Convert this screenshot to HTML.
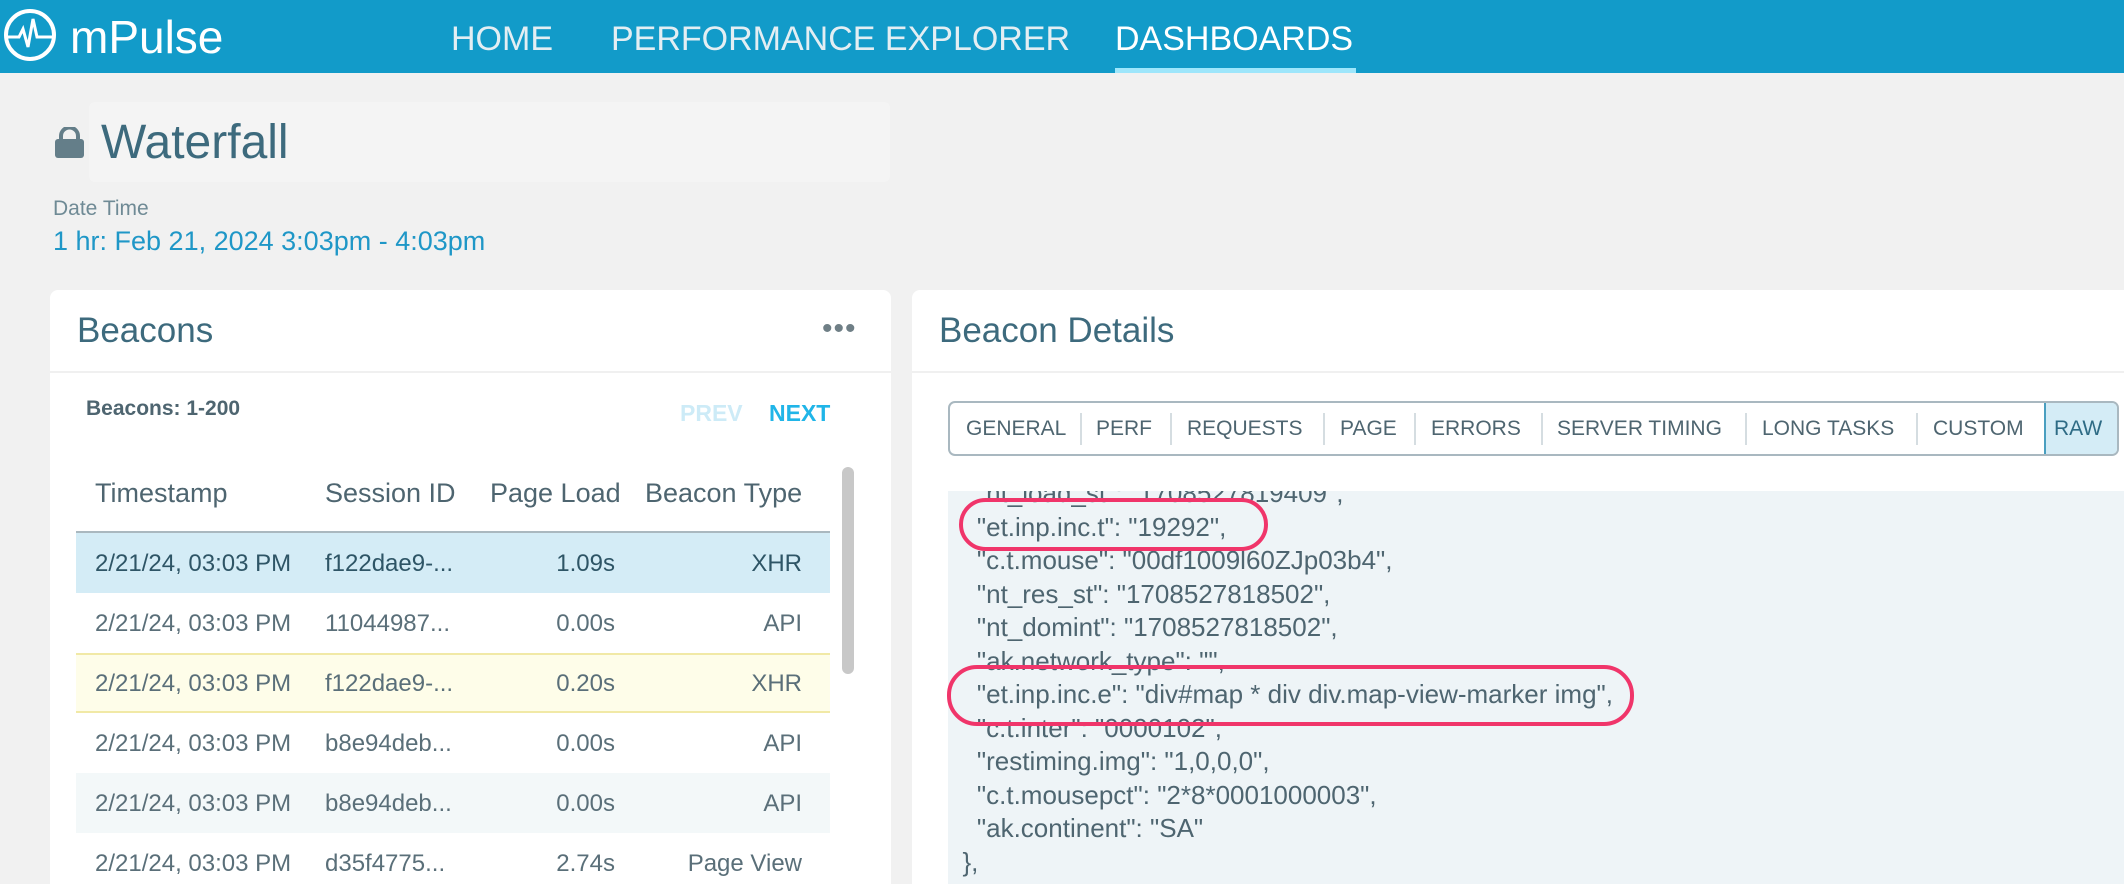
<!DOCTYPE html>
<html style="overflow:hidden;width:2124px;height:884px"><head><meta charset="utf-8"><style>
*{margin:0;padding:0;box-sizing:border-box}
body{width:2124px;height:884px;overflow:hidden;background:#f1f1f1;font-family:"Liberation Sans",sans-serif;position:relative}
.a{position:absolute;white-space:nowrap}
#hdr{position:absolute;left:0;top:0;width:2124px;height:73px;background:#129bc9}
.nav{color:#e3eef3;font-size:34px;top:20px}
.panel{position:absolute;background:#fff;border-radius:8px 8px 0 0}
.th{font-size:27px;color:#4e6570;top:478px}
.row{position:absolute;left:76px;width:754px;height:60px}
.row span{position:absolute;top:17px;font-size:24px;color:#5a6f79}
.tab{font-size:21px;color:#4e6570;top:417px}
.sep{position:absolute;top:413px;width:2px;height:32px;background:#d5dde1}
#code{position:absolute;left:948px;top:491px;width:1176px;height:393px;background:#eef4f7;overflow:hidden}
#code div{position:absolute;left:0;top:-14px;font-size:26px;color:#4e6570;line-height:33.5px;white-space:pre}
.ell{position:absolute;border:4px solid #f0356a;border-radius:30px}
</style></head><body>
<div id="hdr"></div>
<svg class="a" style="left:3px;top:7px" width="54" height="56" viewBox="0 0 54 56"><circle cx="27" cy="28" r="24" fill="none" stroke="#fff" stroke-width="4"/><path d="M5 30 H16 L20 22 L25 40 L30 12 L34 30 H49" fill="none" stroke="#fff" stroke-width="3"/></svg>
<div class="a" style="left:70px;top:10px;font-size:46px;color:#fff">mPulse</div>
<div class="a nav" style="left:451px">HOME</div>
<div class="a nav" style="left:611px">PERFORMANCE EXPLORER</div>
<div class="a nav" style="left:1115px;color:#fff">DASHBOARDS</div>
<div class="a" style="left:1115px;top:68px;width:241px;height:5px;background:#9ee6fb"></div>

<div class="a" style="left:89px;top:102px;width:801px;height:80px;background:#f4f4f4;border-radius:6px"></div>
<svg class="a" style="left:55px;top:127px" width="29" height="31" viewBox="0 0 29 31"><path d="M6 13 V9 A8.5 8.5 0 0 1 23 9 V13" fill="none" stroke="#647e89" stroke-width="4"/><rect x="0" y="12" width="29" height="19" rx="3" fill="#647e89"/></svg>
<div class="a" style="left:101px;top:115px;font-size:48px;color:#3d6a7d">Waterfall</div>
<div class="a" style="left:53px;top:197px;font-size:21px;color:#6f8a95">Date Time</div>
<div class="a" style="left:53px;top:226px;font-size:27px;color:#1f97c7">1 hr: Feb 21, 2024 3:03pm - 4:03pm</div>

<div class="panel" style="left:50px;top:290px;width:841px;height:594px"></div>
<div class="a" style="left:50px;top:371px;width:841px;height:2px;background:#f0f0f0"></div>
<div class="a" style="left:77px;top:311px;font-size:35px;color:#3d6a7d">Beacons</div>
<div class="a" style="left:822px;top:312px;font-size:30px;color:#6f7f86;letter-spacing:1px">•••</div>
<div class="a" style="left:86px;top:397px;font-size:21px;font-weight:bold;color:#4e6570">Beacons: 1-200</div>
<div class="a" style="left:680px;top:400px;font-size:23px;font-weight:bold;color:#cdebf7">PREV</div>
<div class="a" style="left:769px;top:400px;font-size:23px;font-weight:bold;color:#20b5e8">NEXT</div>
<div class="a th" style="left:95px">Timestamp</div>
<div class="a th" style="left:325px">Session ID</div>
<div class="a th" style="left:490px">Page Load</div>
<div class="a th" style="left:645px">Beacon Type</div>
<div class="a" style="left:76px;top:531px;width:754px;height:3px;background:#aab8bf"></div>

<div class="row" style="top:533px;background:#d4ecf6"><span style="left:19px;color:#2e5566">2/21/24, 03:03 PM</span><span style="left:249px;color:#2e5566">f122dae9-...</span><span style="right:215px;color:#2e5566">1.09s</span><span style="right:28px;color:#2e5566">XHR</span></div>
<div class="row" style="top:593px"><span style="left:19px">2/21/24, 03:03 PM</span><span style="left:249px">11044987...</span><span style="right:215px">0.00s</span><span style="right:28px">API</span></div>
<div class="row" style="top:653px;background:#fefde9;border-top:2px solid #f1e9a6;border-bottom:2px solid #f1e9a6"><span style="left:19px;top:15px">2/21/24, 03:03 PM</span><span style="left:249px;top:15px">f122dae9-...</span><span style="right:215px;top:15px">0.20s</span><span style="right:28px;top:15px">XHR</span></div>
<div class="row" style="top:713px"><span style="left:19px">2/21/24, 03:03 PM</span><span style="left:249px">b8e94deb...</span><span style="right:215px">0.00s</span><span style="right:28px">API</span></div>
<div class="row" style="top:773px;background:#f3f8f9"><span style="left:19px">2/21/24, 03:03 PM</span><span style="left:249px">b8e94deb...</span><span style="right:215px">0.00s</span><span style="right:28px">API</span></div>
<div class="row" style="top:833px;height:51px"><span style="left:19px">2/21/24, 03:03 PM</span><span style="left:249px">d35f4775...</span><span style="right:215px">2.74s</span><span style="right:28px">Page View</span></div>
<div class="a" style="left:842px;top:467px;width:12px;height:207px;background:#c8c8c8;border-radius:6px"></div>

<div class="panel" style="left:912px;top:290px;width:1212px;height:594px;border-radius:8px 0 0 0"></div>
<div class="a" style="left:912px;top:371px;width:1212px;height:2px;background:#f0f0f0"></div>
<div class="a" style="left:939px;top:311px;font-size:35px;color:#3d6a7d">Beacon Details</div>
<div class="a" style="left:948px;top:401px;width:1171px;height:55px;border:2px solid #a9b8c0;border-radius:7px;overflow:hidden"><div class="a" style="left:1094px;top:0;width:80px;height:55px;background:#d4ecf6;border-left:2px solid #4a9fc0"></div></div>
<div class="a tab" style="left:966px">GENERAL</div><div class="sep" style="left:1080px"></div>
<div class="a tab" style="left:1096px">PERF</div><div class="sep" style="left:1170px"></div>
<div class="a tab" style="left:1187px">REQUESTS</div><div class="sep" style="left:1323px"></div>
<div class="a tab" style="left:1340px">PAGE</div><div class="sep" style="left:1414px"></div>
<div class="a tab" style="left:1431px">ERRORS</div><div class="sep" style="left:1541px"></div>
<div class="a tab" style="left:1557px">SERVER TIMING</div><div class="sep" style="left:1745px"></div>
<div class="a tab" style="left:1762px">LONG TASKS</div><div class="sep" style="left:1916px"></div>
<div class="a tab" style="left:1933px">CUSTOM</div>
<div class="a tab" style="left:2054px;color:#2e6b85">RAW</div>

<div id="code"><div>    "nt_load_st": "1708527819409",
    "et.inp.inc.t": "19292",
    "c.t.mouse": "00df1009l60ZJp03b4",
    "nt_res_st": "1708527818502",
    "nt_domint": "1708527818502",
    "ak.network_type": "",
    "et.inp.inc.e": "div#map * div div.map-view-marker img",
    "c.t.inter": "0000102",
    "restiming.img": "1,0,0,0",
    "c.t.mousepct": "2*8*0001000003",
    "ak.continent": "SA"
  },</div></div>
<div class="ell" style="left:959px;top:498px;width:309px;height:53px"></div>
<div class="ell" style="left:947px;top:665px;width:687px;height:61px"></div>
</body></html>
